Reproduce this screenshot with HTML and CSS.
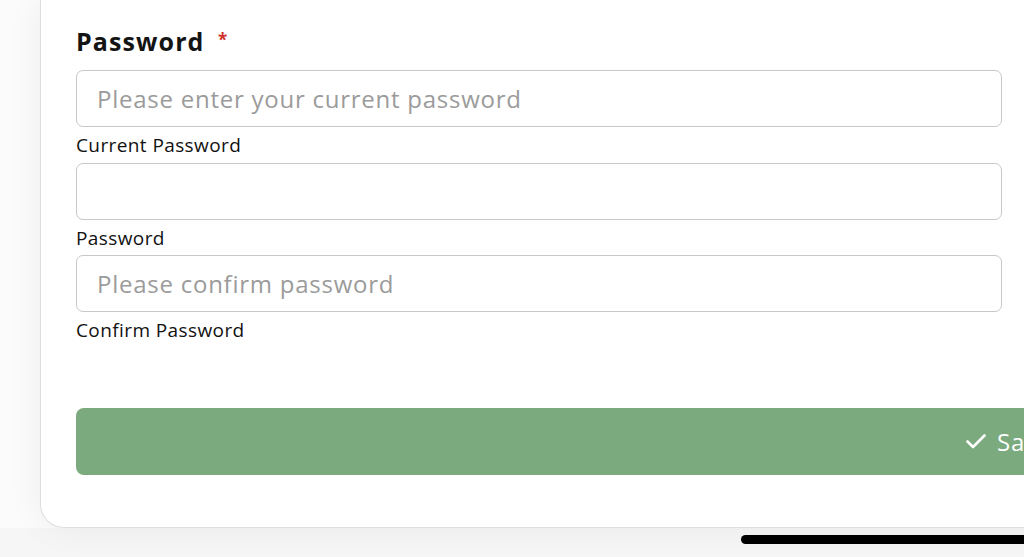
FILE: index.html
```html
<!DOCTYPE html>
<html lang="en">
<head>
<meta charset="utf-8">
<title>Change Password</title>
<link rel="stylesheet" href="styles.css">
</head>
<body>
<div class="page">
  <form class="card">
    <h2 class="heading">Password <span class="req">*</span></h2>
    <input class="field" type="password" placeholder="Please enter your current password">
    <div class="label">Current Password</div>
    <input class="field" type="password">
    <div class="label">Password</div>
    <input class="field" type="password" placeholder="Please confirm password">
    <div class="label">Confirm Password</div>
    <button class="save" type="button">
      <svg class="check" viewBox="0 0 24 24" width="24" height="24"><path d="M3.5 12.5l5.5 5.5L20.5 6.5" fill="none" stroke="#fff" stroke-width="2.6" stroke-linecap="round" stroke-linejoin="round"/></svg>
      <span>Save</span>
    </button>
  </form>
</div>
<div class="home-indicator"></div>
</body>
</html>
```
FILE: styles.css
```css
html, body {
  margin: 0;
  height: 557px;
  overflow: hidden;
  background: #f6f6f6;
  font-family: "Open Sans", "Liberation Sans", sans-serif;
}
.page {
  padding-left: 40px;
  background: #fbfbfb;
}
.card {
  width: 1900px;
  background: #fff;
  border: 1px solid #dedede;
  border-top: none;
  border-radius: 0 0 0 24px;
  padding: 23px 0 52px 35px;
  box-shadow: 0 0 36px rgba(0, 0, 0, 0.06);
  box-sizing: border-box;
  display: flex;
  flex-direction: column;
  align-items: flex-start;
}
.heading {
  margin: 0 0 12px;
  font-size: 25px;
  line-height: 33px;
  font-weight: 700;
  letter-spacing: 1.1px;
  color: #141414;
}
.req {
  color: #d0302b;
  font-size: 17px;
  letter-spacing: 0;
  vertical-align: 5px;
  margin-left: 6px;
}
.field {
  width: 926px;
  height: 57px;
  box-sizing: border-box;
  border: 1.5px solid #c8c8c8;
  border-radius: 7px;
  padding: 0 20px;
  font-family: inherit;
  font-size: 24px;
  letter-spacing: 0.75px;
  color: #222;
  background: #fff;
  outline: none;
}
.field::placeholder {
  color: #9b9b9b;
}
.label {
  margin: 6px 0 5px;
  font-size: 19px;
  line-height: 24.5px;
  letter-spacing: 0.4px;
  color: #111;
}
.save {
  margin-top: 60px;
  width: 1860px;
  height: 67px;
  border: none;
  border-radius: 8px;
  background: #7aaa7e;
  color: #fff;
  font-family: inherit;
  font-size: 24px;
  letter-spacing: 0.75px;
  display: flex;
  align-items: center;
  justify-content: center;
  gap: 9px;
  padding: 0 0 0 4px;
}
.check {
  display: block;
}
.home-indicator {
  position: absolute;
  left: 741px;
  top: 535px;
  width: 500px;
  height: 9px;
  border-radius: 5px;
  background: #000;
}
```
